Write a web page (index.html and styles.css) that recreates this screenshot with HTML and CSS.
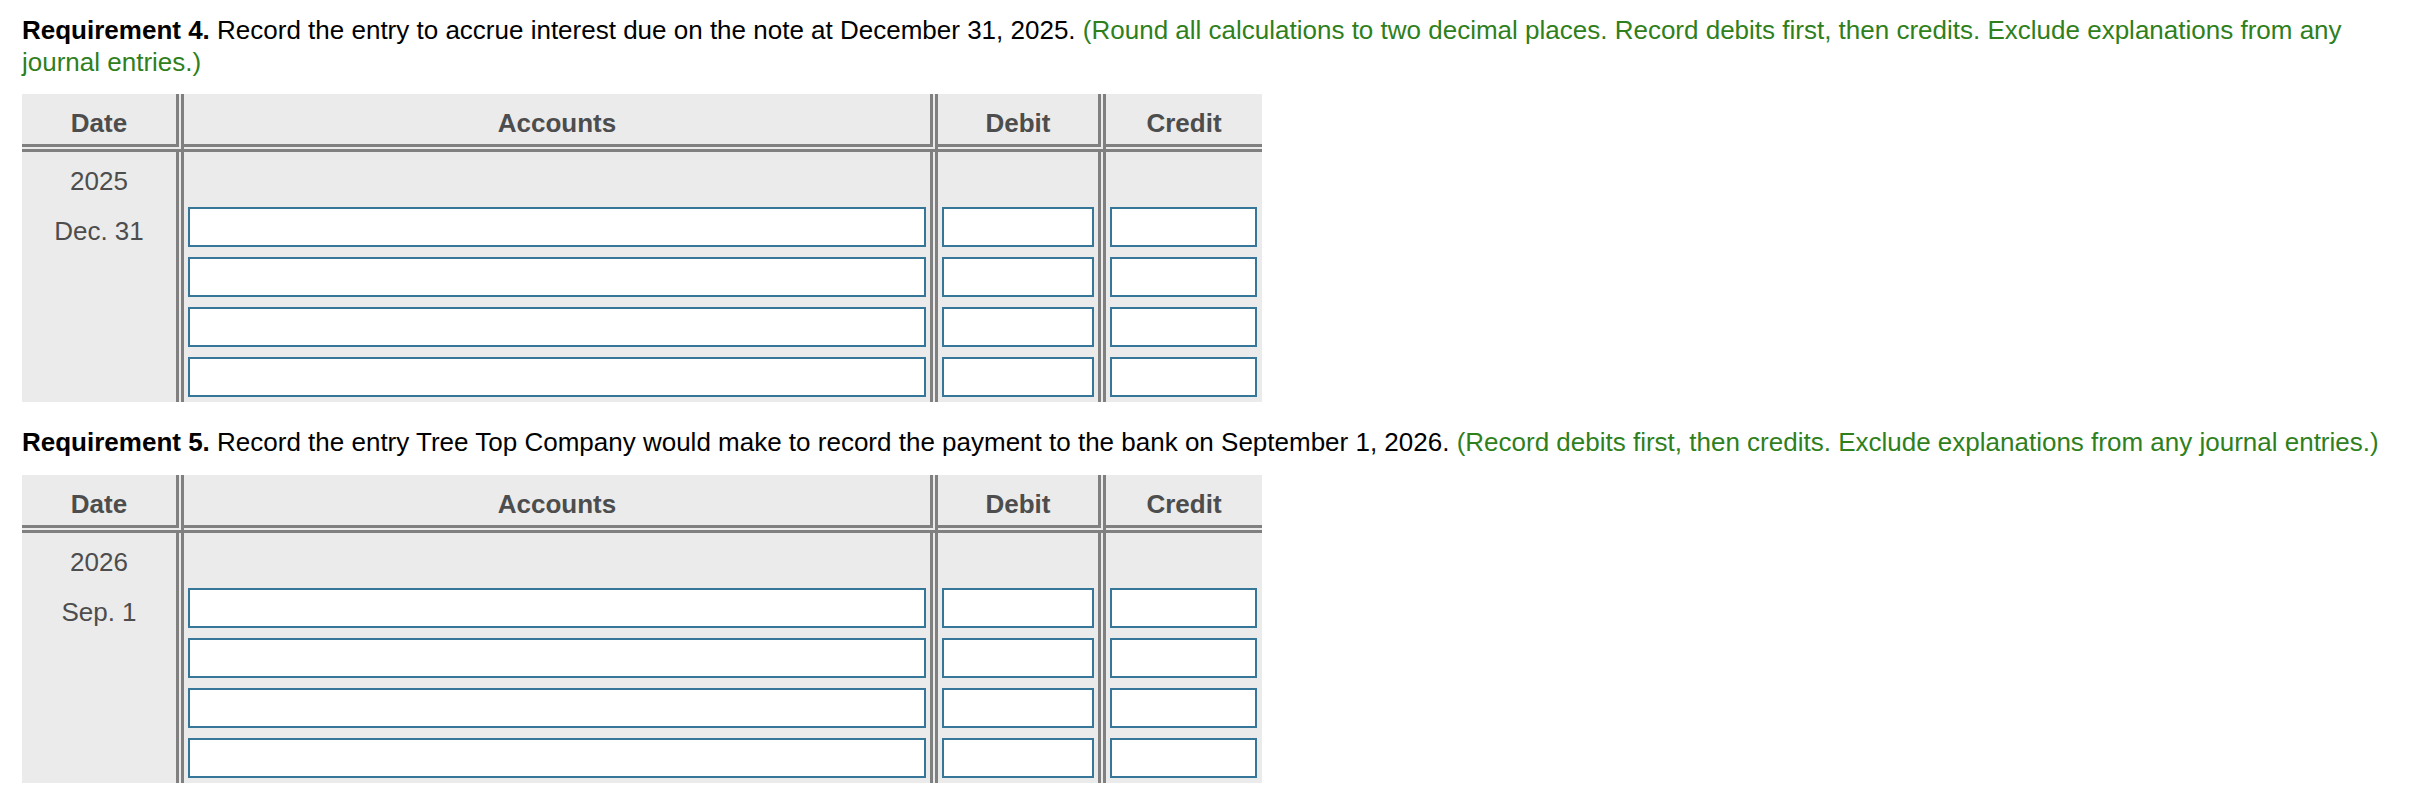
FILE: index.html
```html
<!DOCTYPE html>
<html>
<head>
<meta charset="utf-8">
<link rel="stylesheet" href="styles.css">
</head>
<body>
<div class="page">
  <p class="req"><b>Requirement 4.</b> <span>Record the entry to accrue interest due on the note at December 31, 2025.</span> <span class="hint">(Round all calculations to two decimal places. Record debits first, then credits. Exclude explanations from any journal entries.)</span></p>
  <table class="journal">
    <thead>
      <tr><th class="c-date">Date</th><th class="c-acc">Accounts</th><th class="c-deb">Debit</th><th class="c-cred">Credit</th></tr>
    </thead>
    <tbody>
      <tr class="year"><td class="c-date">2025</td><td class="c-acc"></td><td class="c-deb"></td><td class="c-cred"></td></tr>
      <tr><td class="c-date">Dec. 31</td><td class="c-acc"><input class="box"></td><td class="c-deb"><input class="box"></td><td class="c-cred"><input class="box"></td></tr>
      <tr><td class="c-date"></td><td class="c-acc"><input class="box"></td><td class="c-deb"><input class="box"></td><td class="c-cred"><input class="box"></td></tr>
      <tr><td class="c-date"></td><td class="c-acc"><input class="box"></td><td class="c-deb"><input class="box"></td><td class="c-cred"><input class="box"></td></tr>
      <tr><td class="c-date"></td><td class="c-acc"><input class="box"></td><td class="c-deb"><input class="box"></td><td class="c-cred"><input class="box"></td></tr>
    </tbody>
  </table>

  <p class="req req2"><b>Requirement 5.</b> <span>Record the entry Tree Top Company would make to record the payment to the bank on September 1, 2026.</span> <span class="hint">(Record debits first, then credits. Exclude explanations from any journal entries.)</span></p>
  <table class="journal">
    <thead>
      <tr><th class="c-date">Date</th><th class="c-acc">Accounts</th><th class="c-deb">Debit</th><th class="c-cred">Credit</th></tr>
    </thead>
    <tbody>
      <tr class="year"><td class="c-date">2026</td><td class="c-acc"></td><td class="c-deb"></td><td class="c-cred"></td></tr>
      <tr><td class="c-date">Sep. 1</td><td class="c-acc"><input class="box"></td><td class="c-deb"><input class="box"></td><td class="c-cred"><input class="box"></td></tr>
      <tr><td class="c-date"></td><td class="c-acc"><input class="box"></td><td class="c-deb"><input class="box"></td><td class="c-cred"><input class="box"></td></tr>
      <tr><td class="c-date"></td><td class="c-acc"><input class="box"></td><td class="c-deb"><input class="box"></td><td class="c-cred"><input class="box"></td></tr>
      <tr><td class="c-date"></td><td class="c-acc"><input class="box"></td><td class="c-deb"><input class="box"></td><td class="c-cred"><input class="box"></td></tr>
    </tbody>
  </table>
</div>
</body>
</html>
```
FILE: styles.css
```css
html, body {
  margin: 0;
  padding: 0;
  background: #ffffff;
}
body {
  font-family: "Liberation Sans", Arial, sans-serif;
  color: #000;
}
.page {
  padding: 14px 22px 0 22px;
}
.req {
  margin: 0;
  font-size: 26px;
  line-height: 32px;
  color: #000;
}
.req b {
  font-weight: bold;
}
.hint {
  color: #2f7f1c;
}
.journal {
  margin-top: 16px;
  border-collapse: separate;
  border-spacing: 0;
  background: #ebebeb;
  table-layout: fixed;
  width: 1240px;
}
.req2 {
  margin-top: 24px;
}
.req2 + .journal {
  margin-top: 17px;
}
.journal th,
.journal td {
  box-sizing: border-box;
  height: 50px;
  font-size: 26px;
  color: #4d4d4d;
  text-align: center;
  vertical-align: middle;
}
.journal th {
  height: 58px;
  padding: 8px 0 0 0;
  font-weight: bold;
  border-bottom: 8px double #808080;
}
.journal td {
  padding: 0 4px;
  font-weight: normal;
}
.journal .c-date {
  width: 162px;
  border-right: 8px double #808080;
}
.journal .c-acc {
  width: 754px;
  border-right: 8px double #808080;
}
.journal .c-deb {
  width: 168px;
  border-right: 8px double #808080;
}
.journal .c-cred {
  width: 156px;
}
.journal td.c-cred {
  padding-right: 5px;
}
.journal td.c-date {
  padding-top: 9px;
}
.box {
  display: block;
  width: 100%;
  height: 40px;
  box-sizing: border-box;
  margin: 0;
  border: 2px solid #357699;
  background: #fff;
  font: inherit;
  padding: 0 6px;
  outline: none;
}
```
